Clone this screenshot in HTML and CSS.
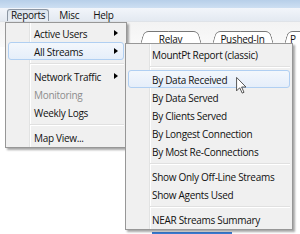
FILE: index.html
```html
<!DOCTYPE html>
<html>
<head>
<meta charset="utf-8">
<link rel="stylesheet" href="styles.css">
</head>
<body>
<div class="window">
  <div class="titlebar"></div>
  <div class="menubar">
    <span class="mb-item open">Reports</span>
    <span class="mb-item">Misc</span>
    <span class="mb-item">Help</span>
  </div>
  <div class="content">
    <div class="tabstrip">
      <div class="stub"></div>
      <div class="tabs">
        <div class="tab">Relay</div>
        <div class="tab">Pushed-In</div>
        <div class="tab last">P</div>
      </div>
    </div>
    <div class="panel">
      <div class="selbar"></div>
    </div>
  </div>

  <div class="menu main">
    <div class="item sub">Active Users</div>
    <div class="item sub hl">All Streams</div>
    <div class="sep"></div>
    <div class="item sub">Network Traffic</div>
    <div class="item disabled">Monitoring</div>
    <div class="item">Weekly Logs</div>
    <div class="sep"></div>
    <div class="item">Map View...</div>
  </div>

  <div class="menu submenu">
    <div class="item">MountPt Report (classic)</div>
    <div class="sep"></div>
    <div class="item hl">By Data Received</div>
    <div class="item">By Data Served</div>
    <div class="item">By Clients Served</div>
    <div class="item">By Longest Connection</div>
    <div class="item">By Most Re-Connections</div>
    <div class="sep"></div>
    <div class="item">Show Only Off-Line Streams</div>
    <div class="item">Show Agents Used</div>
    <div class="sep"></div>
    <div class="item">NEAR Streams Summary</div>
  </div>

  <svg class="cursor" viewBox="0 0 12 19" width="11" height="17">
    <path d="M0.5 0.5 L0.5 15.5 L4 12 L6.8 18 L8.8 17.1 L6.1 11.2 L11 11.2 Z" fill="#fff" stroke="#444" stroke-width="1" stroke-linejoin="round"/>
  </svg>
</div>
</body>
</html>
```

FILE: styles.css
```css
* { box-sizing: border-box; }

html, body {
  margin: 0;
  padding: 0;
}

body {
  width: 300px;
  height: 234px;
  overflow: hidden;
  background: #ffffff;
  font-family: "Open Sans", "Noto Sans", sans-serif;
  font-size: 10px;
  letter-spacing: -0.3px;
  color: #111;
}

.window {
  position: relative;
  width: 300px;
  height: 234px;
  display: flex;
  flex-direction: column;
}

.titlebar {
  height: 8px;
  flex: none;
  background: linear-gradient(#b7cfe9, #cddff2);
}

.menubar {
  height: 14px;
  flex: none;
  display: flex;
  align-items: flex-end;
  padding-left: 7px;
  gap: 6px;
  background: linear-gradient(#f2f5fa, #e3e9f1);
  border-bottom: 1px solid #dfe3e8;
}

.mb-item {
  height: 12px;
  line-height: 11px;
  padding: 0 3px;
  border: 1px solid transparent;
  border-bottom: none;
}

.mb-item.open {
  border-color: #8c96a3;
  border-radius: 3px 3px 0 0;
  background: linear-gradient(#dbe3ec, #e9eef4);
}

.content {
  flex: 1;
  display: flex;
  flex-direction: column;
  background: #ffffff;
}

.tabstrip {
  height: 25px;
  flex: none;
  display: flex;
  align-items: flex-end;
  background: linear-gradient(#f3f3f3, #fafafa);
}

.stub {
  width: 3px;
  height: 15px;
  border-top: 1px solid #8a8a8a;
  margin-right: 139px;
}

.tabs {
  display: flex;
  gap: 9px;
}

.tab {
  position: relative;
  width: 63px;
  height: 16px;
  line-height: 14px;
  padding-top: 1px;
  text-align: center;
  z-index: 0;
}

.tab.last {
  text-align: left;
  padding-left: 7px;
}

.tab::before,
.tab::after {
  content: "";
  position: absolute;
  top: 0;
  bottom: -4px;
  background: #fff;
  border-top: 1px solid #777;
  z-index: -1;
}

.tab::before {
  left: 2px;
  right: 50%;
  border-left: 1px solid #777;
  border-top-left-radius: 5px;
  transform: skewX(-16deg);
}

.tab::after {
  left: 50%;
  right: 2px;
  border-right: 1px solid #777;
  border-top-right-radius: 5px;
  transform: skewX(16deg);
}

.panel {
  flex: 1;
  display: flex;
  align-items: flex-end;
  padding-left: 152px;
}

.selbar {
  width: 80px;
  height: 2px;
  background: #3b7dd4;
}

/* Menus (overlays) */
.menu {
  position: absolute;
  background:
    linear-gradient(to right, transparent 23px, #e2e3e3 23px, #e2e3e3 24px, #ffffff 24px, #ffffff 25px, transparent 25px),
    #f0f0f0;
  border: 1px solid #979797;
  box-shadow: 2px 2px 2px rgba(0, 0, 0, 0.35);
  padding: 1px 2px;
}

.menu.main {
  left: 5px;
  top: 22px;
  width: 122px;
}

.menu.submenu {
  left: 125px;
  top: 43px;
  width: 168px;
  padding-top: 1px;
  padding-bottom: 1px;
}

.item {
  position: relative;
  height: 18px;
  line-height: 18px;
  padding-left: 25px;
  white-space: nowrap;
  border: 1px solid transparent;
  border-radius: 3px;
}

.submenu .item {
  padding-left: 23px;
}

.item.hl {
  border-color: #b0cff2;
  background: linear-gradient(#f3f7fc, #e5eefa);
}

.item.disabled {
  color: #8d8d8d;
}

.item.sub::after {
  content: "";
  position: absolute;
  right: 5px;
  top: 5px;
  border-left: 4px solid #000;
  border-top: 3.5px solid transparent;
  border-bottom: 3.5px solid transparent;
}

.sep {
  position: relative;
  height: 7px;
}

.sep::before {
  content: "";
  position: absolute;
  left: 22px;
  right: 0;
  top: 3px;
  height: 1px;
  background: #e0e0e0;
  border-bottom: 1px solid #ffffff;
  box-sizing: content-box;
}

.cursor {
  position: absolute;
  left: 236px;
  top: 77px;
}
```
